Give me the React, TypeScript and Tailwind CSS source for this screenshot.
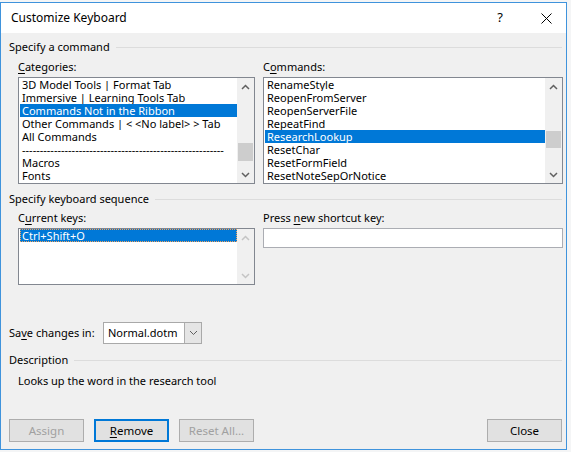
import React from "react";

const font = { fontFamily: '"Noto Sans", "Open Sans", sans-serif' };

function Chevron({ up, disabled }: { up?: boolean; disabled?: boolean }) {
  return (
    <svg width="9" height="6" viewBox="0 0 9 6" className="block">
      <path
        d={up ? "M1 5 L4.5 1.5 L8 5" : "M1 1 L4.5 4.5 L8 1"}
        fill="none"
        stroke={disabled ? "#c4c4c4" : "#606060"}
        strokeWidth="1.5"
      />
    </svg>
  );
}

function Key({ text, k }: { text: string; k: number }) {
  return (
    <span>
      {text.slice(0, k)}
      <span className="underline underline-offset-2">{text[k]}</span>
      {text.slice(k + 1)}
    </span>
  );
}

function GroupHeader({ title }: { title: string }) {
  return (
    <div className="flex items-center h-4 pl-[8px] pr-[4px] gap-[6px]">
      <span className="leading-4 whitespace-nowrap">{title}</span>
      <div className="flex-1 h-px bg-[#dcdcdc]" />
    </div>
  );
}

type ListProps = {
  items: string[];
  selected: number;
  heightClass: string;
  thumbClass?: string;
  disabled?: boolean;
  focused?: boolean;
};

function ListBox({ items, selected, heightClass, thumbClass, disabled, focused }: ListProps) {
  return (
    <div className={`flex border border-[#828790] bg-white ${heightClass}`}>
      <div className="flex-1 overflow-hidden pl-px">
        {items.map((item, i) => (
          <div
            key={i}
            className={`h-[13px] leading-[13px] pl-[2px] whitespace-nowrap overflow-hidden ${
              i === selected ? "bg-[#0078d7] text-white" : ""
            } ${i === selected && focused ? "outline outline-1 outline-dotted outline-[#f3a25b] -outline-offset-1" : ""}`}
          >
            {item}
          </div>
        ))}
      </div>
      <div className="w-[17px] bg-[#f0f0f0] flex flex-col">
        <div className="h-[17px] flex items-center justify-center">
          <Chevron up disabled={disabled} />
        </div>
        <div className="flex-1 px-px">
          {thumbClass && <div className={`bg-[#cdcdcd] ${thumbClass}`} />}
        </div>
        <div className="h-[17px] flex items-center justify-center">
          <Chevron disabled={disabled} />
        </div>
      </div>
    </div>
  );
}

function Btn({
  children,
  disabled,
  focused,
}: {
  children: React.ReactNode;
  disabled?: boolean;
  focused?: boolean;
}) {
  return (
    <button
      className={`w-[75px] h-[23px] bg-[#e1e1e1] text-[11.5px] leading-none ${
        focused ? "border-2 border-[#0078d7]" : "border border-[#adadad]"
      } ${disabled ? "text-[#a0a0a0]" : "text-black"}`}
      style={font}
    >
      {children}
    </button>
  );
}

export default function App() {
  const categories = [
    "3D Model Tools | Format Tab",
    "Immersive | Learning Tools Tab",
    "Commands Not in the Ribbon",
    "Other Commands | < <No label> > Tab",
    "All Commands",
    "---------------------------------------------------------",
    "Macros",
    "Fonts",
  ];
  const commands = [
    "RenameStyle",
    "ReopenFromServer",
    "ReopenServerFile",
    "RepeatFind",
    "ResearchLookup",
    "ResetChar",
    "ResetFormField",
    "ResetNoteSepOrNotice",
  ];

  return (
    <div className="w-[571px] h-[452px] bg-[#f4f5f6] pt-[2px] overflow-hidden" style={font}>
      <div className="w-[567px] h-[448px] border border-[#3f93dc] bg-[#f0f0f0] flex flex-col text-[11px] text-black">
        {/* Title bar */}
        <div className="h-[30px] bg-white flex items-center pl-[10px]">
          <span className="text-[12px] flex-1">Customize Keyboard</span>
          <span className="text-[13px] w-[52px] text-center">?</span>
          <div className="w-[40px] flex justify-center">
            <svg width="11" height="11" viewBox="0 0 11 11">
              <path d="M0.5 0.5 L10.5 10.5 M10.5 0.5 L0.5 10.5" stroke="#000" strokeWidth="1" />
            </svg>
          </div>
        </div>

        <div className="mt-[6px]">
          <GroupHeader title="Specify a command" />
        </div>

        <div className="flex gap-[8px] pl-[17px] mt-[4px]">
          <div className="w-[237px] flex flex-col">
            <div className="h-4 leading-4">
              <Key text="Categories:" k={0} />
            </div>
            <div className="mt-[2px]">
              <ListBox
                items={categories}
                selected={2}
                heightClass="h-[107px]"
                thumbClass="mt-[48px] h-[18px]"
              />
            </div>
          </div>
          <div className="w-[300px] flex flex-col">
            <div className="h-4 leading-4">
              <Key text="Commands:" k={1} />
            </div>
            <div className="mt-[2px]">
              <ListBox
                items={commands}
                selected={4}
                heightClass="h-[107px]"
                thumbClass="mt-[36px] h-[17px]"
              />
            </div>
          </div>
        </div>

        <div className="mt-[7px]">
          <GroupHeader title="Specify keyboard sequence" />
        </div>

        <div className="flex gap-[8px] pl-[17px] mt-[3px]">
          <div className="w-[237px] flex flex-col">
            <div className="h-4 leading-4">
              <Key text="Current keys:" k={1} />
            </div>
            <div className="mt-[2px]">
              <ListBox items={["Ctrl+Shift+O"]} selected={0} heightClass="h-[57px]" disabled focused />
            </div>
          </div>
          <div className="w-[300px] flex flex-col">
            <div className="h-4 leading-4">
              <Key text="Press new shortcut key:" k={6} />
            </div>
            <div className="mt-[2px] h-[20px] bg-white border border-[#abadb3]" />
          </div>
        </div>

        <div className="flex items-center pl-[8px] mt-[37px]">
          <span className="w-[94px]">
            <Key text="Save changes in:" k={2} />
          </span>
          <div className="w-[99px] h-[22px] flex bg-white border border-[#a9a9a9]">
            <span className="flex-1 pl-[4px] leading-[20px]">Normal.dotm</span>
            <div className="w-[17px] bg-[#e5e5e5] border-l border-[#acacac] flex items-center justify-center">
              <svg width="9" height="6" viewBox="0 0 9 6">
                <path d="M1 1 L4.5 4.5 L8 1" fill="none" stroke="#606060" strokeWidth="1" />
              </svg>
            </div>
          </div>
        </div>

        <div className="mt-[8px]">
          <GroupHeader title="Description" />
        </div>

        <div className="pl-[17px] mt-[5px] h-4 leading-4">Looks up the word in the research tool</div>

        <div className="mt-auto mb-[7px] flex items-center pl-[8px] pr-[4px]">
          <div className="flex gap-[10px]">
            <Btn disabled>Assign</Btn>
            <Btn focused>
              <Key text="Remove" k={0} />
            </Btn>
            <Btn disabled>Reset All...</Btn>
          </div>
          <div className="flex-1" />
          <Btn>Close</Btn>
        </div>
      </div>
    </div>
  );
}
